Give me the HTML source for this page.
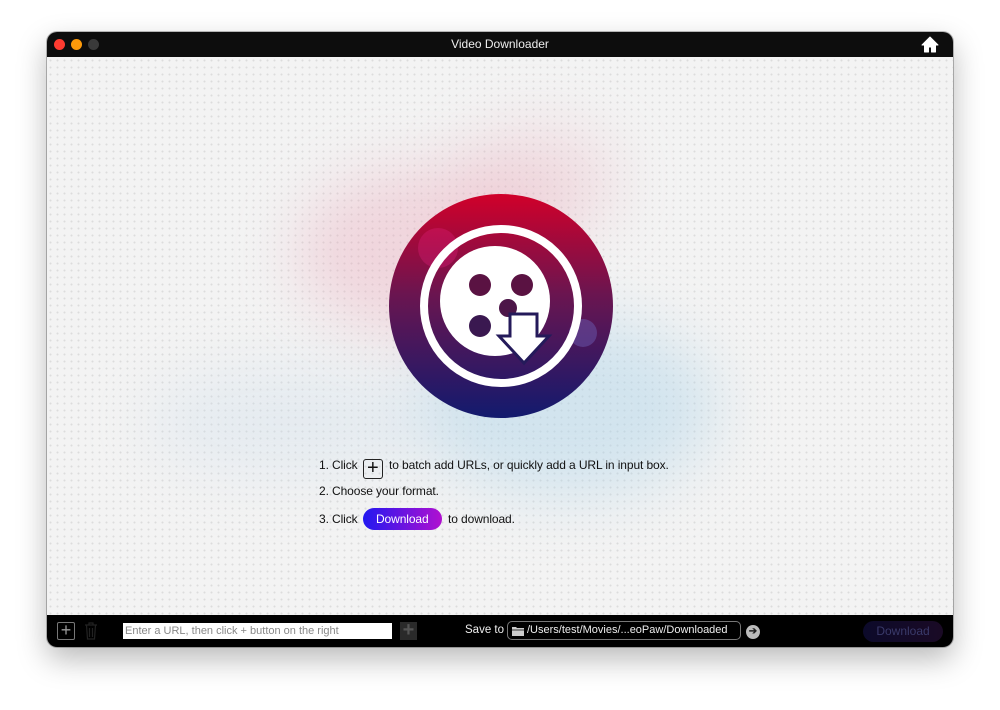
<!DOCTYPE html>
<html><head><meta charset="utf-8"><style>
*{margin:0;padding:0;box-sizing:border-box}
body{width:1000px;height:710px;background:#fff;font-family:"Liberation Sans",sans-serif;position:relative;overflow:hidden}
.win{position:absolute;left:47px;top:32px;width:906px;height:615px;border-radius:10px;overflow:hidden;box-shadow:0 12px 30px rgba(0,0,0,.28),0 0 0 1px rgba(0,0,0,.25);background:#f2f2f2}
.title{position:absolute;left:0;top:0;width:100%;height:25px;background:#0d0d0d;color:#eee;font-size:12px;text-align:center;line-height:25px}
.dot{position:absolute;top:7px;width:11px;height:11px;border-radius:50%}
.main{position:absolute;left:0;top:25px;width:100%;height:558px;background-color:#f3f3f3;background-image:radial-gradient(circle,#dcdcdc 0.8px,transparent 1.2px);background-size:7px 7px;overflow:hidden}
.blob{position:absolute;border-radius:50%;filter:blur(30px)}
.bar{position:absolute;left:0;top:583px;width:100%;height:32px;background:#000}
.txt{position:absolute;font-size:12px;color:#111;left:272px;letter-spacing:-0.1px}
</style></head><body>
<div class="win">
 <div class="title">Video Downloader
  <div class="dot" style="left:7px;background:#fe3b30"></div>
  <div class="dot" style="left:24px;background:#fd9a0a"></div>
  <div class="dot" style="left:41px;background:#3a3a3a"></div>
  <svg style="position:absolute;right:14px;top:4px" width="18" height="17" viewBox="0 0 18 17"><path d="M9 1L1 9h2.5v7h4v-5h3v5h4V9H17z" fill="#fff" stroke="#fff" stroke-width="1" stroke-linejoin="round"/></svg>
 </div>
 <div class="main">
  <div class="blob" style="left:250px;top:110px;width:260px;height:170px;background:rgba(235,160,180,.35)"></div>
  <div class="blob" style="left:410px;top:70px;width:160px;height:110px;background:rgba(235,170,185,.3)"></div>
  <div class="blob" style="left:370px;top:260px;width:300px;height:180px;background:rgba(170,210,232,.45)"></div>
  <div class="blob" style="left:100px;top:310px;width:300px;height:110px;background:rgba(200,220,235,.3)"></div>
  <svg style="position:absolute;left:341px;top:136px" width="226" height="226" viewBox="0 0 226 226">
   <defs><linearGradient id="g" x1="0" y1="0" x2="0" y2="1"><stop offset="0" stop-color="#d1002a"/><stop offset=".45" stop-color="#6a1550"/><stop offset="1" stop-color="#121a6e"/></linearGradient></defs>
   <circle cx="113" cy="113" r="112" fill="url(#g)"/>
   <circle cx="50" cy="55" r="20" fill="#e0207a" opacity=".35"/>
   <circle cx="195" cy="140" r="14" fill="#6a5ab0" opacity=".5"/>
   <circle cx="113" cy="113" r="77" fill="none" stroke="#fff" stroke-width="8"/>
   <circle cx="107" cy="108" r="55" fill="#fff"/>
   <circle cx="92" cy="92" r="11" fill="#5a1242"/>
   <circle cx="134" cy="92" r="11" fill="#5a1242"/>
   <circle cx="120" cy="115" r="9" fill="#4c1548"/>
   <circle cx="92" cy="133" r="11" fill="#3a1850"/>
   <path d="M122 121h27v22h12l-25 27-25-27h11z" fill="#fff" stroke="#241a5a" stroke-width="3" stroke-linejoin="miter"/>
  </svg>
  <div class="txt" style="top:401px">1. Click <span style="display:inline-block;width:20px;height:20px;border:1.5px solid #222;border-radius:3px;vertical-align:-5px;margin:0 3px 0 2px;text-align:center;line-height:16px;font-size:20px">+</span> to batch add URLs, or quickly add a URL in input box.</div>
  <div class="txt" style="top:427px">2. Choose your format.</div>
  <div class="txt" style="top:451px">3. Click <span style="display:inline-block;width:79px;height:22px;border-radius:11px;background:linear-gradient(90deg,#2218f0,#b010d0);color:#fff;text-align:center;line-height:22px;margin:0 3px 0 2px;font-size:12px">Download</span> to download.</div>
 </div>
 <div class="bar">
  <div style="position:absolute;left:10px;top:7px;width:18px;height:18px;border:1px solid #777;border-radius:2px;color:#999;font-size:18px;line-height:15px;text-align:center">+</div>
  <svg style="position:absolute;left:37px;top:7px" width="14" height="18" viewBox="0 0 14 18"><g fill="none" stroke="#222" stroke-width="1.2"><path d="M1 3h12M5 3V1h4v2M2.5 3l1 14h7l1-14M5.5 6v9M8.5 6v9"/></g></svg>
  <div style="position:absolute;left:76px;top:8px;width:269px;height:16px;background:#fff;color:#888;font-size:11px;line-height:16px;padding-left:2px">Enter a URL, then click + button on the right</div>
  <div style="position:absolute;left:353px;top:7px;width:17px;height:18px;background:#2a2a2a;color:#555;font-size:20px;line-height:17px;text-align:center;font-weight:bold">+</div>
  <div style="position:absolute;left:418px;top:9px;color:#eee;font-size:11.5px">Save to</div>
  <div style="position:absolute;left:460px;top:6px;width:234px;height:19px;border:1px solid #777;border-radius:5px;color:#eee;font-size:11px;line-height:17px;padding-left:19px;white-space:nowrap;overflow:hidden">/Users/test/Movies/...eoPaw/Downloaded
   <svg style="position:absolute;left:4px;top:4px" width="12" height="10" viewBox="0 0 12 10"><path d="M0 1h4l1 1h7v8H0z" fill="#ccc"/><path d="M0 4h12" stroke="#333"/></svg></div>
  <div style="position:absolute;left:699px;top:10px;width:14px;height:14px;border-radius:50%;background:#bbb;color:#222;font-size:10px;line-height:14px;text-align:center;font-weight:bold">➔</div>
  <div style="position:absolute;left:816px;top:6px;width:80px;height:21px;border-radius:11px;background:linear-gradient(90deg,#0c0a2a,#1a0a25);color:#3a3a6a;font-size:12px;line-height:21px;text-align:center">Download</div>
 </div>
</div>
</body></html>
